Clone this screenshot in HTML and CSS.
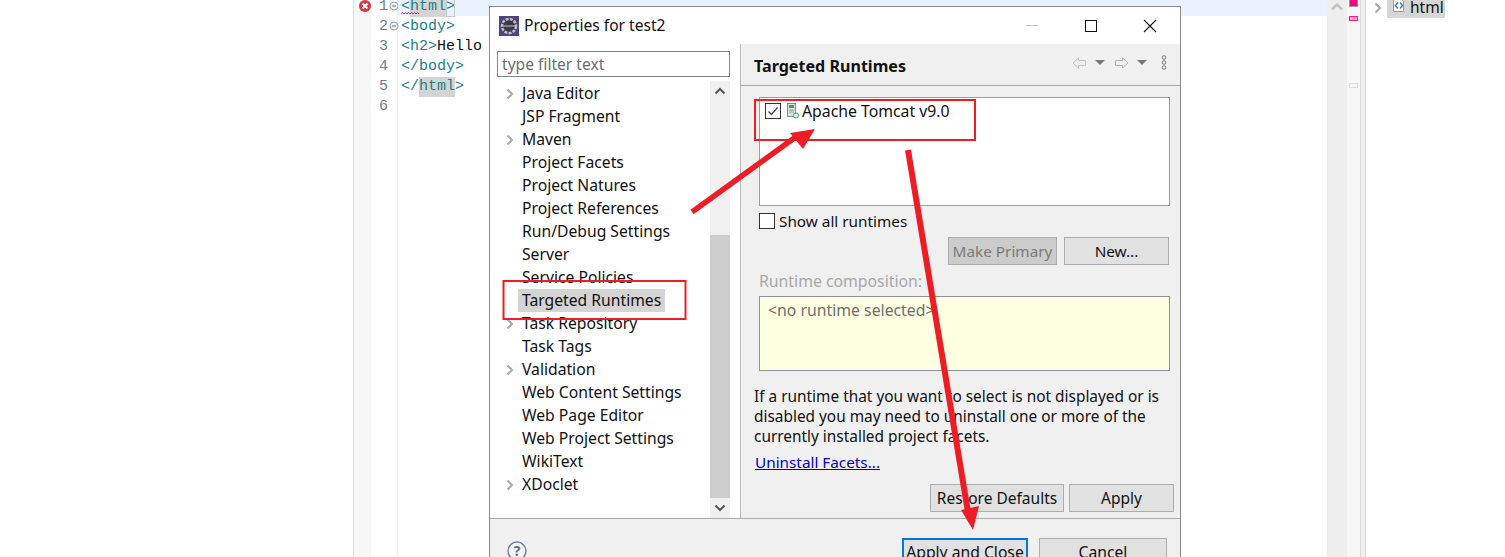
FILE: index.html
```html
<!DOCTYPE html>
<html lang="en">
<head>
<meta charset="utf-8">
<title>Properties for test2</title>
<link rel="stylesheet" href="styles.css">
</head>
<body>
<div class="workbench">
  <div class="blank"></div>
  <div class="ruler"><svg class="err" width="14" height="14" viewBox="0 0 14 14"><circle cx="7" cy="7" r="6" fill="#d9363e"/><path d="M4.5 4.5l5 5M9.500 4.500l-5 5" stroke="#fff" stroke-width="2"/></svg></div>
  <div class="gutter">
    <div class="num">1<svg class="fold" width="10" height="10" viewBox="0 0 10 10"><circle cx="5" cy="5" r="4" fill="#eef1f4" stroke="#93a0ad"/><path d="M3 5h4" stroke="#67758a"/></svg></div>
    <div class="num">2<svg class="fold" width="10" height="10" viewBox="0 0 10 10"><circle cx="5" cy="5" r="4" fill="#eef1f4" stroke="#93a0ad"/><path d="M3 5h4" stroke="#67758a"/></svg></div>
    <div class="num">3</div>
    <div class="num">4</div>
    <div class="num">5</div>
    <div class="num">6</div>
  </div>
  <div class="code">
    <div class="line current"><span class="tag">&lt;</span><span class="tag mark">html</span><span class="tag boxed">&gt;</span><svg class="squiggle" width="19" height="3" viewBox="0 0 19 3"><path d="M0 2l1.500-1.500 1.500 1.500 1.500-1.500 1.500 1.500 1.500-1.500 1.500 1.500 1.500-1.500 1.500 1.500 1.500-1.500 1.500 1.500 1.500-1.500 1.500 1.500" fill="none" stroke="#d0207a"/></svg></div>
    <div class="line"><span class="tag">&lt;body&gt;</span></div>
    <div class="line"><span class="tag">&lt;h2&gt;</span>Hello</div>
    <div class="line"><span class="tag">&lt;/body&gt;</span></div>
    <div class="line"><span class="tag">&lt;/</span><span class="tag mark">html</span><span class="tag">&gt;</span></div>
    <div class="line"></div>
  </div>
  <div class="vscroll"><svg class="vscroll-up" width="14" height="9" viewBox="0 0 14 9"><path d="M2 7.500l5-5 5 5" fill="none" stroke="#c4c4c4" stroke-width="2.500"/></svg></div>
  <div class="overview">
    <span class="ov ov-error"></span>
    <span class="ov ov-warn"></span>
    <span class="ov ov-line"></span>
  </div>
  <div class="sash"></div>
  <div class="outline">
    <div class="outline-row">
      <svg class="chev" width="8" height="12" viewBox="0 0 8 12"><path d="M1.500 1.500l4.500 4.500-4.500 4.500" fill="none" stroke="#a8a8a8" stroke-width="2"/></svg>
      <div class="outline-item">
        <svg class="outline-icon" width="13" height="15" viewBox="0 0 13 15"><path d="M1.500.500h7l3 3v10h-10z" fill="#fffdf6" stroke="#a89a6a"/><path d="M6 4.500L3.500 7.500 6 10.500M8 4.500l2.500 3-2.500 3" fill="none" stroke="#3f7cb8" stroke-width="1.500"/></svg>
        <span class="outline-label">html</span>
      </div>
    </div>
  </div>
</div>

<section class="dialog">
  <header class="titlebar">
    <svg class="appicon" width="20" height="20" viewBox="0 0 20 20"><rect width="20" height="20" fill="#54407a"/><circle cx="10" cy="10" r="7" fill="#3a3a44" stroke="#bfc0c8" stroke-width="2.500" stroke-dasharray="3 1.200"/><path d="M4 10h12" stroke="#c6c6d0"/></svg>
    <span class="title">Properties for test2</span>
    <div class="winctl">
      <span class="minimize"></span>
      <span class="maximize"></span>
      <svg class="close" width="14" height="14" viewBox="0 0 14 14"><path d="M1 1l12 12M13 1L1 13" stroke="#111" stroke-width="1.100"/></svg>
    </div>
  </header>
  <div class="panes">
    <aside class="nav">
      <div class="filter">type filter text</div>
      <div class="treewrap">
        <ul class="tree">
          <li><svg class="twist" width="8" height="12" viewBox="0 0 8 12"><path d="M1.500 1.500l4.500 4.500-4.500 4.500" fill="none" stroke="#a8a8a8" stroke-width="2"/></svg>Java Editor</li>
          <li>JSP Fragment</li>
          <li><svg class="twist" width="8" height="12" viewBox="0 0 8 12"><path d="M1.500 1.500l4.500 4.500-4.500 4.500" fill="none" stroke="#a8a8a8" stroke-width="2"/></svg>Maven</li>
          <li>Project Facets</li>
          <li>Project Natures</li>
          <li>Project References</li>
          <li>Run/Debug Settings</li>
          <li>Server</li>
          <li>Service Policies</li>
          <li><span class="selected">Targeted Runtimes</span></li>
          <li><svg class="twist" width="8" height="12" viewBox="0 0 8 12"><path d="M1.500 1.500l4.500 4.500-4.500 4.500" fill="none" stroke="#a8a8a8" stroke-width="2"/></svg>Task Repository</li>
          <li>Task Tags</li>
          <li><svg class="twist" width="8" height="12" viewBox="0 0 8 12"><path d="M1.500 1.500l4.500 4.500-4.500 4.500" fill="none" stroke="#a8a8a8" stroke-width="2"/></svg>Validation</li>
          <li>Web Content Settings</li>
          <li>Web Page Editor</li>
          <li>Web Project Settings</li>
          <li>WikiText</li>
          <li><svg class="twist" width="8" height="12" viewBox="0 0 8 12"><path d="M1.500 1.500l4.500 4.500-4.500 4.500" fill="none" stroke="#a8a8a8" stroke-width="2"/></svg>XDoclet</li>
        </ul>
        <div class="treescroll">
          <div class="arrowcell"><svg width="12" height="8" viewBox="0 0 12 8"><path d="M1.500 6.500L6 2l4.500 4.500" fill="none" stroke="#555" stroke-width="2"/></svg></div>
          <div class="track"><div class="thumb"></div></div>
          <div class="arrowcell"><svg width="12" height="8" viewBox="0 0 12 8"><path d="M1.500 1.500L6 6l4.500-4.500" fill="none" stroke="#555" stroke-width="2"/></svg></div>
        </div>
      </div>
    </aside>
    <main class="page">
      <div class="pagehead">
        <h1>Targeted Runtimes</h1>
        <div class="tools">
          <svg width="15" height="12" viewBox="0 0 15 12"><path d="M6.500 1L1 6l5.500 5V8.500h7v-5h-7z" fill="none" stroke="#c2c2c2"/></svg>
          <span class="drop"></span>
          <svg class="tool-fwd" width="15" height="12" viewBox="0 0 15 12"><path d="M8.500 1L14 6l-5.500 5V8.500h-7v-5h7z" fill="none" stroke="#b4b4b4"/></svg>
          <span class="drop"></span>
          <svg class="tool-menu" width="6" height="15" viewBox="0 0 6 15"><circle cx="3" cy="2.500" r="1.800" fill="none" stroke="#777"/><circle cx="3" cy="7.500" r="1.800" fill="none" stroke="#777"/><circle cx="3" cy="12.500" r="1.800" fill="none" stroke="#777"/></svg>
        </div>
      </div>
      <div class="pagebody">
        <div class="runtimes">
          <div class="runtime-row">
            <span class="check checked"><svg width="14" height="14" viewBox="0 0 14 14"><path d="M2.500 7.500l3 3 6-7" fill="none" stroke="#444" stroke-width="1.300"/></svg></span>
            <svg class="server" width="12" height="16" viewBox="0 0 12 16"><rect x=".5" y=".5" width="8" height="13" fill="#dfe6dc" stroke="#7e8a80"/><rect x="2" y="2" width="5" height="3" fill="#4f9a58"/><path d="M2 7h5M2 9h5" stroke="#8a94a0"/><circle cx="9" cy="12.500" r="2.500" fill="#e4f4ea" stroke="#2e9a6b"/></svg>
            <span>Apache Tomcat v9.0</span>
          </div>
        </div>
        <label class="showall"><span class="check"></span><span>Show all runtimes</span></label>
        <div class="btnrow">
          <span class="btn disabled">Make Primary</span>
          <span class="btn new">New...</span>
        </div>
        <div class="complabel">Runtime composition:</div>
        <div class="composition">&lt;no runtime selected&gt;</div>
        <p class="desc">If a runtime that you want to select is not displayed or is disabled you may need to uninstall one or more of the currently installed project facets.</p>
        <a class="link" href="#">Uninstall Facets...</a>
        <div class="pagebtns">
          <span class="btn restore">Restore Defaults</span>
          <span class="btn apply">Apply</span>
        </div>
      </div>
    </main>
  </div>
  <footer class="footer">
    <svg class="help" width="20" height="20" viewBox="0 0 20 20"><circle cx="10" cy="10" r="9" fill="#f4f6f8" stroke="#6c7f93" stroke-width="1.400"/><text x="10" y="15" text-anchor="middle" class="helpq">?</text></svg>
    <div class="footbtns">
      <span class="btn primary">Apply and Close</span>
      <span class="btn cancel">Cancel</span>
    </div>
  </footer>
</section>

<svg class="annot" width="1505" height="557" viewBox="0 0 1505 557">
  <rect x="755" y="100" width="220" height="40" fill="none" stroke="#ee1c25" stroke-width="2"/>
  <rect x="503.500" y="281" width="182" height="38" fill="none" stroke="#ee1c25" stroke-width="2"/>
  <path d="M692 212l105-76" stroke="#ee1c25" stroke-width="5.500" fill="none"/>
  <path d="M815 129l-25 4 13 16z" fill="#ee1c25"/>
  <path d="M908 150l60 362" stroke="#ee1c25" stroke-width="6" fill="none"/>
  <path d="M973 530l-12-20 18-4z" fill="#ee1c25"/>
</svg>
</body>
</html>
```
FILE: styles.css
```css
* { box-sizing: border-box; }
html, body { margin: 0; padding: 0; height: 557px; overflow: hidden; background: #fff; }
body { font-family: "Noto Sans", "Open Sans", sans-serif; font-size: 15.300px; color: #111; position: relative; }

.workbench { display: flex; height: 557px; width: 1505px; }
.blank { width: 354px; background: #fff; border-right: 1px solid #dcdcdc; }
.ruler { width: 17px; background: #f7f7f7; position: relative; }
.err { position: absolute; left: 4px; top: -1px; }
.gutter { width: 27px; margin-top: -4px; background: #fff; border-right: 1px solid #eee; color: #6f7f8c; font-family: "Liberation Mono", monospace; font-size: 15px; }
.num { height: 20px; line-height: 22px; padding-left: 8px; position: relative; }
.fold { position: absolute; left: 18px; top: 5px; }
.code { flex: 1; margin-top: -4px; font-family: "Liberation Mono", monospace; font-size: 15px; color: #111; }
.line { height: 20px; line-height: 22px; padding-left: 3px; white-space: pre; position: relative; }
.line.current { background: #e8f2fe; }
.tag { color: #17808c; }
.mark { background: #d4d4d4; display: inline-block; height: 20px; line-height: 20px; }
.squiggle { position: absolute; left: 3px; top: 16px; }
.boxed { outline: 1px solid #c8c8c8; outline-offset: -1px; display: inline-block; height: 20px; line-height: 20px; }
.vscroll { width: 20px; background: #eeeeee; position: relative; }
.vscroll-up { position: absolute; left: 3px; top: 2px; }
.overview { width: 13px; background: #f6f6f6; position: relative; }
.ov { position: absolute; left: 2px; width: 9px; }
.ov-error { top: 0; height: 7px; background: #ff0080; border: 1px solid #999; border-top: 0; }
.ov-warn { top: 16px; height: 5px; background: #ff9cc9; border: 1px solid #f01a8a; }
.ov-line { top: 83px; height: 5px; border: 1px solid #dedede; }
.sash { width: 6px; background: #f0f0f0; border-left: 1px solid #d8d8d8; border-right: 1px solid #d8d8d8; }
.outline { flex: 0 0 139px; background: #fff; }
.outline-row { display: flex; align-items: flex-start; padding-left: 8px; gap: 5px; }
.chev { margin-top: 2px; flex: none; }
.outline-item { display: flex; gap: 5px; align-items: flex-start; width: 58px; height: 18px; background: #d6d6d6; padding-left: 5px; font-size: 15.500px; color: #111; overflow: hidden; }
.outline-icon { margin-top: -2px; flex: none; }
.outline-label { line-height: 14px; }

.dialog { position: absolute; left: 489px; top: 6px; width: 692px; height: 551px; overflow: hidden; background: #f0f0f0; border: 1px solid #8a8a8a; border-bottom: 0; display: flex; flex-direction: column; }
.titlebar { height: 37px; flex: none; background: #fff; display: flex; align-items: center; padding-left: 9px; }
.appicon { flex: none; }
.title { margin-left: 5px; padding-bottom: 2px; font-size: 15.600px; }
.winctl { margin-left: auto; display: flex; align-items: center; }
.minimize { width: 12px; height: 1px; background: #c8c8c8; margin-right: 47px; }
.maximize { width: 12px; height: 12px; border: 1px solid #111; margin-right: 46px; }
.close { margin-right: 23px; }
.panes { display: flex; height: 475px; flex: none; border-bottom: 1px solid #a9a9a9; }
.nav { width: 251px; flex: none; background: #fff; border-right: 1px solid #b9b9b9; padding: 7px 0 0 7px; display: flex; flex-direction: column; }
.filter { width: 233px; height: 26px; border: 1px solid #828790; line-height: 25px; padding-left: 4px; color: #6d6d6d; background: #fff; flex: none; font-size: 15.600px; }
.treewrap { display: flex; flex: 1; margin-top: 4px; min-height: 0; }
.tree { list-style: none; margin: 0; padding: 1px 0 0; width: 213px; flex: none; font-size: 15.700px; }
.tree li { height: 23px; line-height: 23px; padding-left: 25px; position: relative; white-space: nowrap; }
.twist { position: absolute; left: 9px; top: 6px; }
.selected { display: inline-block; margin-left: -4px; padding: 0 4px; background: #d4d4d4; line-height: 23px; }
.treescroll { width: 20px; display: flex; flex-direction: column; background: #f0f0f0; }
.arrowcell { height: 20px; flex: none; display: flex; align-items: center; justify-content: center; }
.track { flex: 1; display: flex; flex-direction: column; justify-content: flex-end; }
.thumb { height: 263px; background: #cdcdcd; }

.page { flex: 1; min-width: 0; display: flex; flex-direction: column; }
.pagehead { height: 42px; border-bottom: 1px solid #a9a9a9; display: flex; align-items: center; padding: 0 13px; flex: none; }
.pagehead h1 { margin: 2px 0 0; font-size: 16.100px; font-weight: 700; }
.tools { margin-left: auto; margin-top: -4px; display: flex; align-items: center; }
.drop { width: 0; height: 0; border-left: 5px solid transparent; border-right: 5px solid transparent; border-top: 5px solid #777; margin-left: 8px; }
.tool-fwd { margin-left: 9px; }
.tool-menu { margin-left: 14px; }
.pagebody { flex: 1; padding: 11px 0 0 18px; display: flex; flex-direction: column; }
.runtimes { width: 411px; height: 109px; background: #fff; border: 1px solid #9b9ba6; padding: 5px 0 0 5px; font-size: 15.800px; }
.runtime-row { display: flex; align-items: center; height: 16px; }
.check { width: 16px; height: 16px; flex: none; border: 1px solid #333; background: #fff; display: block; }
.check svg { display: block; }
.server { margin-left: 6px; margin-right: 3px; flex: none; }
.showall { display: flex; align-items: center; gap: 4px; margin-top: 7px; height: 16px; }
.btnrow { display: flex; justify-content: flex-end; gap: 7px; width: 410px; margin-top: 8px; }
.btn { height: 28px; line-height: 27px; text-align: center; border: 1px solid #adadad; background: #e1e1e1; display: block; white-space: nowrap; flex: none; color: #111; }
.disabled { width: 109px; background: #cccccc; color: #7a7a7a; }
.new { width: 105px; }
.complabel { margin-top: 6px; height: 25px; line-height: 20px; color: #a8a8a8; font-size: 15.800px; }
.composition { width: 411px; height: 75px; background: #ffffe1; border: 1px solid #8a90a0; padding: 3px 8px; line-height: 20px; color: #6f6f6f; font-size: 15.800px; }
.desc { margin: 16px 0 0 -5px; width: 420px; line-height: 20px; font-size: 15.400px; }
.link { margin: 5px 0 0 -4px; color: #0000c8; text-decoration: underline; line-height: 20px; width: max-content; font-size: 15.300px; }
.pagebtns { display: flex; gap: 5px; margin: 12px 0 0 171px; font-size: 15.500px; }
.restore { width: 134px; }
.apply { width: 105px; }
.footer { flex: 1; display: flex; padding: 19px 0 0 17px; }
.help { flex: none; margin-top: 3px; }
.helpq { font-family: "Noto Sans", sans-serif; font-size: 14px; font-weight: 700; fill: #5a6f86; }
.footbtns { display: flex; gap: 11px; margin-left: 375px; font-size: 15.700px; }
.primary { width: 126px; border: 2px solid #0078d7; line-height: 24px; }
.cancel { width: 128px; }
.annot { position: absolute; left: 0; top: 0; pointer-events: none; }
```
